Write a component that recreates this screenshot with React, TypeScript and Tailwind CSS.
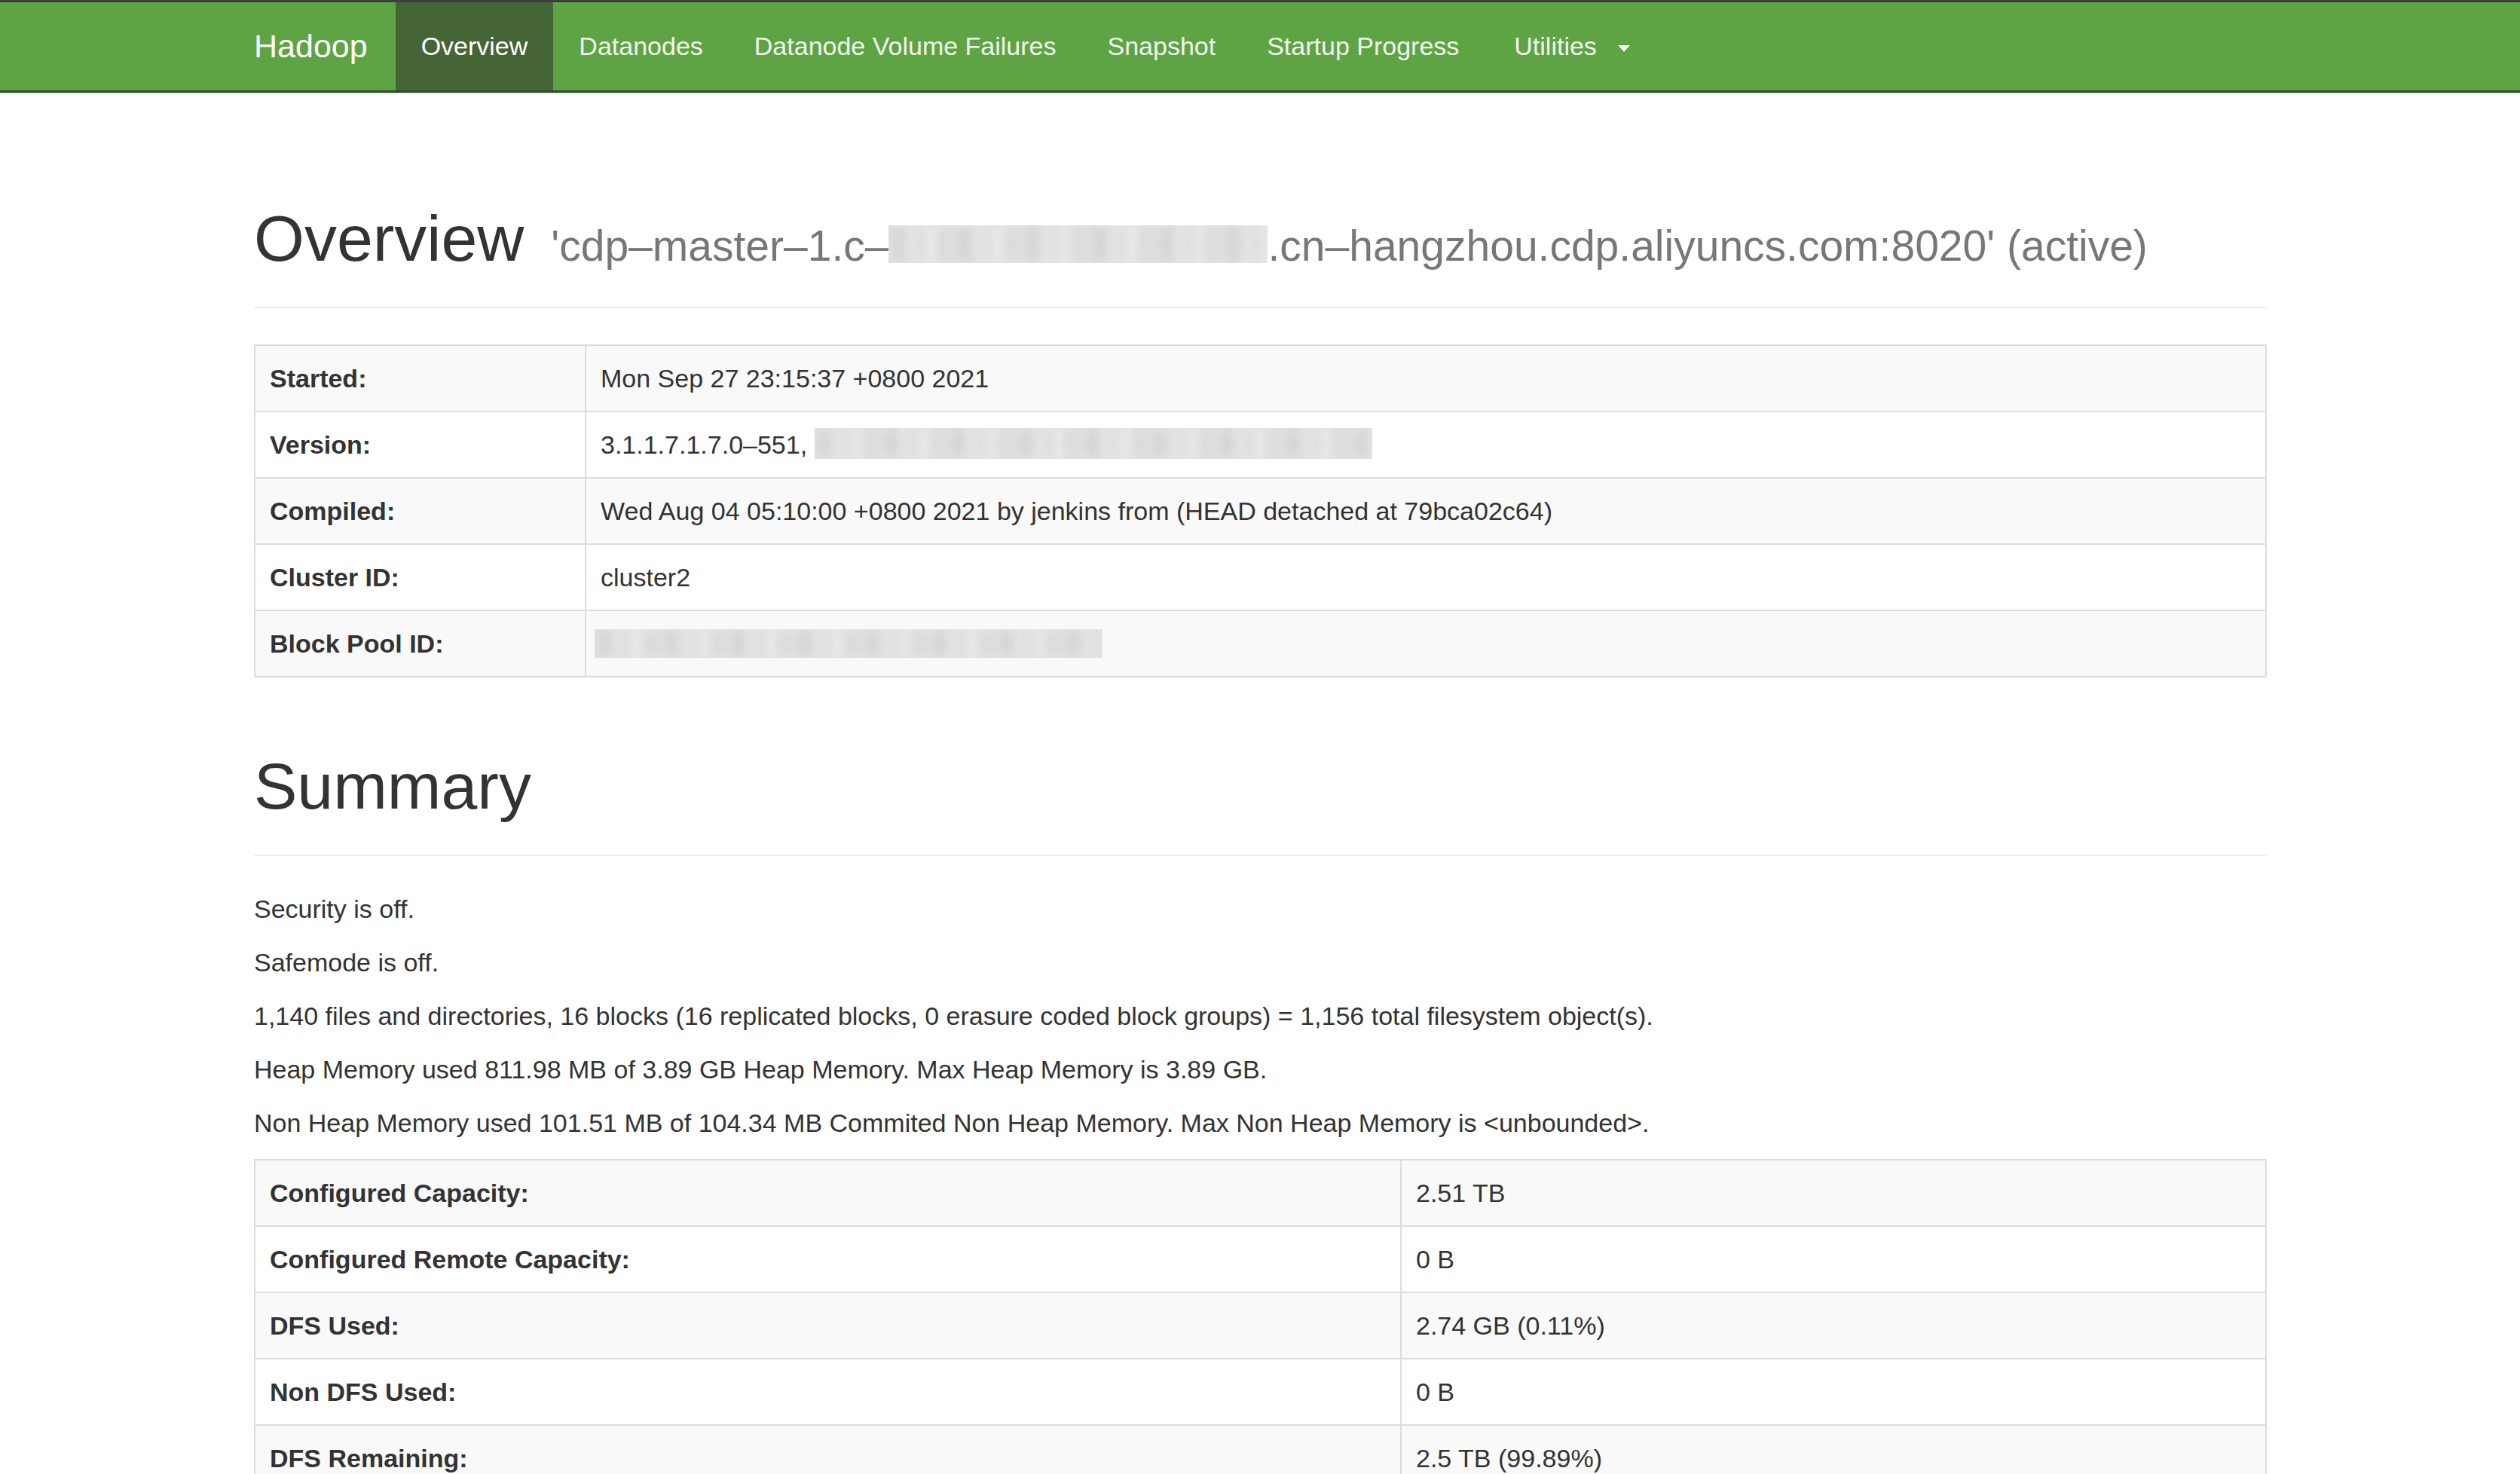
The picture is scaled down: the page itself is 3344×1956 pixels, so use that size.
import React from "react";

const navLinks = ["Datanodes", "Datanode Volume Failures", "Snapshot", "Startup Progress"];

type Row = { label: string; value: React.ReactNode };

// Light grey smear used where an identifier is masked out.
function Masked({ className }: { className: string }) {
  return (
    <span className={`inline-block overflow-hidden bg-[#e4e4e4] ${className}`}>
      <span className="block h-full w-full blur-[7px] bg-[repeating-linear-gradient(90deg,#dcdcdc_0px,#d2d2d2_17px,#e9e9e9_29px,#dadada_43px,#eeeeee_57px,#d6d6d6_71px,#e4e4e4_89px)]" />
    </span>
  );
}

function InfoTable({ rows, labelCol }: { rows: Row[]; labelCol: string }) {
  return (
    <table className="w-full table-fixed border-collapse border-2 border-[#dddddd]">
      <colgroup>
        <col className={labelCol} />
        <col />
      </colgroup>
      <tbody>
        {rows.map((r, i) => (
          <tr key={r.label} className={i % 2 === 0 ? "bg-[#f9f9f9]" : "bg-white"}>
            <th className="border-2 border-[#dddddd] px-[19px] py-[19px] text-left align-top text-[34px] font-bold leading-[48px] whitespace-nowrap">
              {r.label}
            </th>
            <td className="border-2 border-[#dddddd] px-[19px] py-[19px] align-top text-[34px] leading-[48px] whitespace-nowrap">
              {r.value}
            </td>
          </tr>
        ))}
      </tbody>
    </table>
  );
}

function PageHeader({ children }: { children: React.ReactNode }) {
  return (
    <div className="border-b-2 border-[#eeeeee] pb-[20px]">
      <h1 className="mb-[23px] text-[86px] leading-[95px] font-normal text-[#333333] whitespace-nowrap">
        {children}
      </h1>
    </div>
  );
}

export default function App() {
  const overviewRows: Row[] = [
    { label: "Started:", value: "Mon Sep 27 23:15:37 +0800 2021" },
    {
      label: "Version:",
      value: (
        <>
          3.1.1.7.1.7.0–551, <Masked className="h-[41px] w-[740px] align-[-7px]" />
        </>
      ),
    },
    {
      label: "Compiled:",
      value: "Wed Aug 04 05:10:00 +0800 2021 by jenkins from (HEAD detached at 79bca02c64)",
    },
    { label: "Cluster ID:", value: "cluster2" },
    {
      label: "Block Pool ID:",
      value: <Masked className="-ml-[8px] h-[38px] w-[674px] align-[-7px]" />,
    },
  ];

  const summaryRows: Row[] = [
    { label: "Configured Capacity:", value: "2.51 TB" },
    { label: "Configured Remote Capacity:", value: "0 B" },
    { label: "DFS Used:", value: "2.74 GB (0.11%)" },
    { label: "Non DFS Used:", value: "0 B" },
    { label: "DFS Remaining:", value: "2.5 TB (99.89%)" },
  ];

  const summaryLines = [
    "Security is off.",
    "Safemode is off.",
    "1,140 files and directories, 16 blocks (16 replicated blocks, 0 erasure coded block groups) = 1,156 total filesystem object(s).",
    "Heap Memory used 811.98 MB of 3.89 GB Heap Memory. Max Heap Memory is 3.89 GB.",
    "Non Heap Memory used 101.51 MB of 104.34 MB Commited Non Heap Memory. Max Non Heap Memory is <unbounded>.",
  ];

  return (
    <div className="min-h-screen bg-white text-[#333333] font-['Liberation_Sans',Arial,sans-serif]">
      {/* top navigation bar */}
      <nav className="border-t-[3px] border-b-[3px] border-t-[#3d3d3d] border-b-[#2e4a24] bg-[#5fa444] shadow-[0_2px_0_#ececec]">
        <div className="flex h-[117px] items-stretch pl-[302px]">
          <a className="flex items-center pl-[35px] pr-[37px] text-[43px] text-white">Hadoop</a>
          <ul className="flex items-stretch">
            <li className="flex items-center bg-[#456536] px-[34px] text-[34px] text-white">Overview</li>
            {navLinks.map((l) => (
              <li key={l} className="flex items-center px-[34px] text-[34px] text-[#f2f5ef]">
                {l}
              </li>
            ))}
            <li className="ml-[5px] flex items-center px-[34px] text-[34px] text-[#f2f5ef]">
              Utilities
              <span className="ml-[28px] mt-[5px] h-0 w-0 border-x-[8px] border-t-[9px] border-x-transparent border-t-[#f2f5ef]" />
            </li>
          </ul>
        </div>
      </nav>

      <main className="ml-[337px] w-[2671px] pt-[146px]">
        <PageHeader>
          Overview{" "}
          <small className="ml-[12px] text-[57px] leading-[60px] text-[#777777]">
            'cdp–master–1.c–
            <Masked className="h-[50px] w-[503px] align-[-3px]" />
            .cn–hangzhou.cdp.aliyuncs.com:8020' (active)
          </small>
        </PageHeader>

        <div className="mt-[48px]">
          <InfoTable rows={overviewRows} labelCol="w-[439px]" />
        </div>

        <div className="mt-[97px]">
          <PageHeader>Summary</PageHeader>
        </div>

        <div className="mt-[47px] text-[34px] leading-[47px]">
          {summaryLines.map((t) => (
            <p key={t} className="mb-[24px] whitespace-nowrap">
              {t}
            </p>
          ))}
        </div>

        <InfoTable rows={summaryRows} labelCol="w-[1521px]" />
      </main>
    </div>
  );
}
